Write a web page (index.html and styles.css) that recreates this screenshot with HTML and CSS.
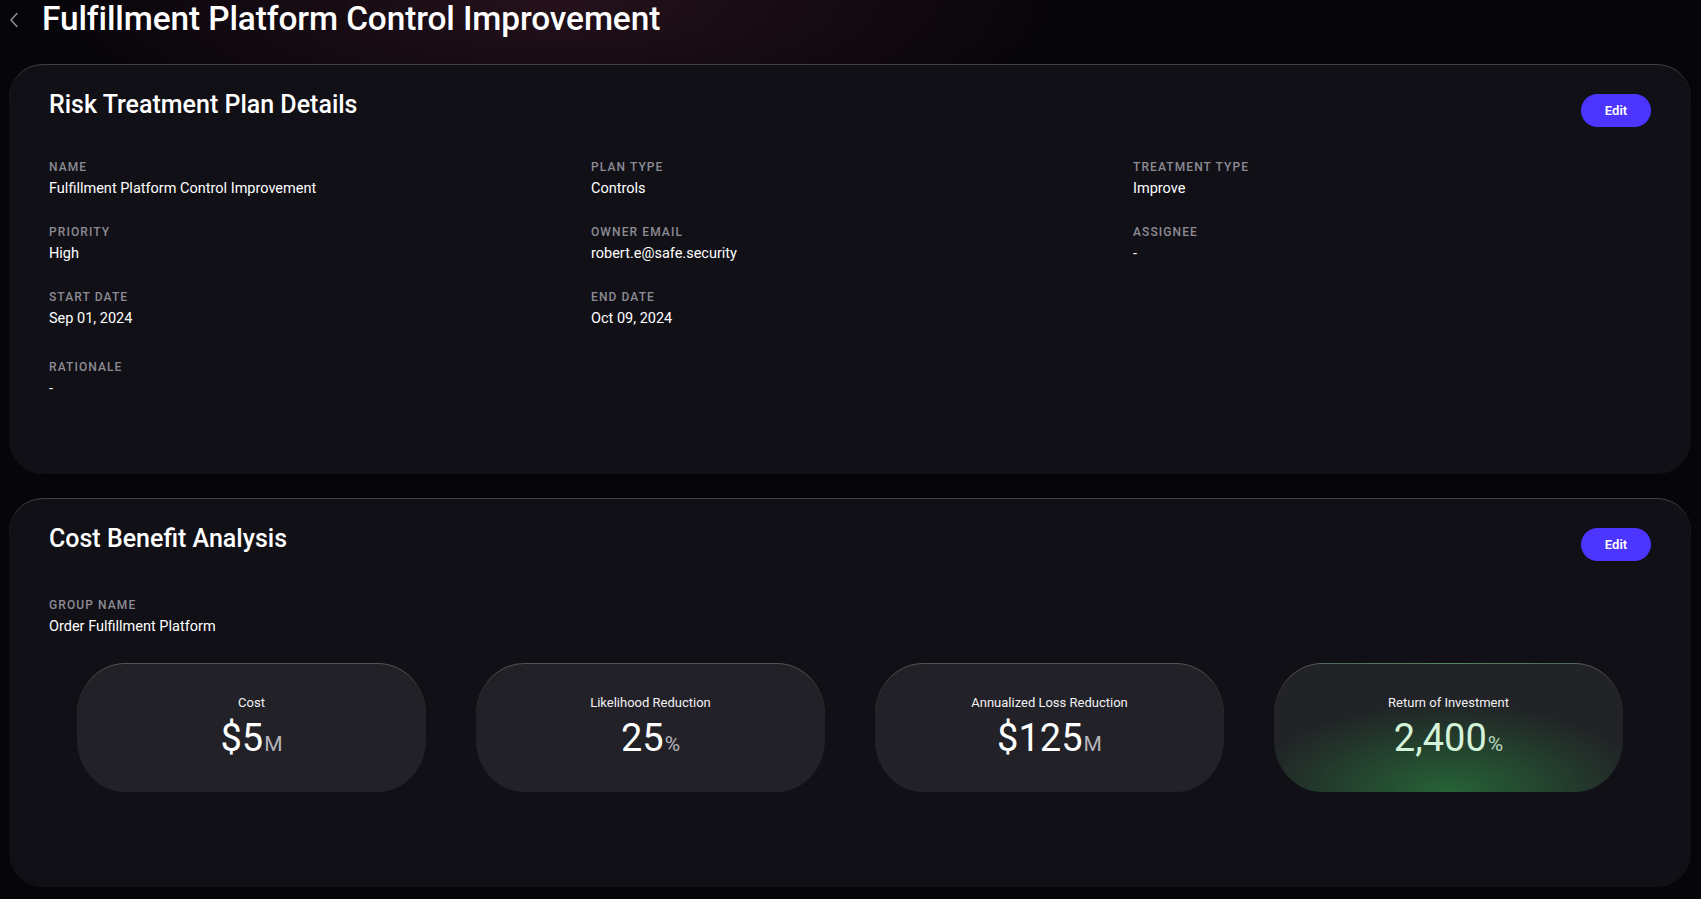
FILE: index.html
```html
<!DOCTYPE html>
<html lang="en">
<head>
<meta charset="utf-8">
<title>Fulfillment Platform Control Improvement</title>
<link rel="stylesheet" href="styles.css">
</head>
<body>
<div class="page">
  <header class="page-header">
    <button class="back" aria-label="Back">
      <svg width="10" height="16" viewBox="0 0 10 16"><path d="M8 1.5 L2 8 L8 14.5" fill="none" stroke="#9a99a3" stroke-width="1.3" stroke-linecap="round" stroke-linejoin="round"/></svg>
    </button>
    <h1 class="page-title">Fulfillment Platform Control Improvement</h1>
  </header>

  <section class="card card-details">
    <div class="card-head">
      <h2 class="card-title">Risk Treatment Plan Details</h2>
      <button class="btn-edit">Edit</button>
    </div>
    <div class="fields">
      <div class="field"><div class="label">Name</div><div class="value">Fulfillment Platform Control Improvement</div></div>
      <div class="field"><div class="label">Plan Type</div><div class="value">Controls</div></div>
      <div class="field"><div class="label">Treatment Type</div><div class="value">Improve</div></div>
      <div class="field"><div class="label">Priority</div><div class="value">High</div></div>
      <div class="field"><div class="label">Owner Email</div><div class="value">robert.e@safe.security</div></div>
      <div class="field"><div class="label">Assignee</div><div class="value">-</div></div>
      <div class="field"><div class="label">Start Date</div><div class="value">Sep 01, 2024</div></div>
      <div class="field"><div class="label">End Date</div><div class="value">Oct 09, 2024</div></div>
      <div class="field"></div>
    </div>
    <div class="field rationale"><div class="label">Rationale</div><div class="value">-</div></div>
  </section>

  <section class="card card-cba">
    <div class="card-head">
      <h2 class="card-title">Cost Benefit Analysis</h2>
      <button class="btn-edit">Edit</button>
    </div>
    <div class="field group"><div class="label">Group Name</div><div class="value">Order Fulfillment Platform</div></div>
    <div class="stats">
      <div class="stat">
        <div class="stat-label">Cost</div>
        <div class="stat-value">$5<span class="unit">M</span></div>
      </div>
      <div class="stat">
        <div class="stat-label">Likelihood Reduction</div>
        <div class="stat-value">25<span class="unit">%</span></div>
      </div>
      <div class="stat">
        <div class="stat-label">Annualized Loss Reduction</div>
        <div class="stat-value">$125<span class="unit">M</span></div>
      </div>
      <div class="stat stat-roi">
        <div class="stat-label">Return of Investment</div>
        <div class="stat-value">2,400<span class="unit">%</span></div>
      </div>
    </div>
  </section>
</div>
</body>
</html>
```

FILE: styles.css
```css
* { box-sizing: border-box; }
html, body { margin: 0; padding: 0; }
body {
  background-color: #060509;
  background-image: radial-gradient(ellipse 520px 160px at 560px 0px, rgba(110, 45, 70, 0.3), rgba(6,5,9,0) 100%);
  background-repeat: no-repeat;
  color: #ffffff;
  font-family: Roboto, "Liberation Sans", sans-serif;
  height: 899px;
  overflow: hidden;
}
.page {
  padding: 0 10px 0 9px;
}
.page-header {
  display: flex;
  align-items: center;
  height: 40px;
  margin-bottom: 24px;
}
.back {
  background: none;
  border: 0;
  padding: 0;
  width: 33px;
  height: 20px;
  display: flex;
  align-items: center;
  cursor: pointer;
}
.page-title {
  margin: 0;
  font-size: 33.4px;
  font-weight: 500;
  line-height: 36px;
  margin-top: -2px;
  letter-spacing: -0.1px;
}
.card {
  background: #111016;
  border-radius: 34px;
  border-top: 1px solid rgba(255,255,255,0.2);
  padding: 25px 40px 0 40px;
}
.card-details { height: 410px; margin-bottom: 24px; }
.card-cba { height: 389px; }
.card-head {
  display: flex;
  justify-content: space-between;
  align-items: flex-start;
  height: 63px;
}
.card-title {
  margin: 0;
  font-size: 25px;
  font-weight: 500;
  line-height: 30px;
}
.btn-edit {
  margin-top: 4px;
  width: 70px;
  height: 33px;
  border: 0;
  border-radius: 17px;
  background: #4b35ff;
  color: #fff;
  font-family: Roboto, "Liberation Sans", sans-serif;
  font-size: 13px;
  font-weight: 600;
  cursor: pointer;
}
.fields {
  display: grid;
  grid-template-columns: repeat(3, 518px);
  column-gap: 24px;
  row-gap: 25px;
  margin-top: 6px;
}
.label {
  font-size: 12px;
  line-height: 16px;
  font-weight: 500;
  text-transform: uppercase;
  letter-spacing: 1.1px;
  color: #8c8b94;
}
.value {
  margin-top: 4px;
  font-size: 14.5px;
  line-height: 20px;
  color: #ffffff;
}
.rationale { margin-top: 30px; }
.group { margin-top: 10px; }
.stats {
  display: grid;
  grid-template-columns: repeat(4, 349px);
  column-gap: 50px;
  justify-content: center;
  margin-top: 26px;
}
.stat {
  height: 129px;
  border-radius: 48px / 52px;
  background: #222127;
  border-top: 1px solid rgba(255,255,255,0.22);
  display: flex;
  flex-direction: column;
  align-items: center;
  padding-top: 30px;
}
.stat-label {
  font-size: 13px;
  line-height: 18px;
  color: #f2f2f4;
}
.stat-value {
  margin-top: 4px;
  font-size: 38px;
  line-height: 44px;
  font-weight: 400;
  color: #ffffff;
}
.unit {
  font-size: 21px;
  color: #b5b4bb;
  margin-left: 1px;
}
.stat-roi {
  background-color: #212326;
  background-image: radial-gradient(ellipse 200px 90px at 50% 100%, rgba(40, 120, 60, 0.75), rgba(33, 35, 38, 0) 100%);
}
.stat-roi .stat-value { color: #d5f3d9; }
.stat-roi .unit { color: #b9d7bd; }
```
